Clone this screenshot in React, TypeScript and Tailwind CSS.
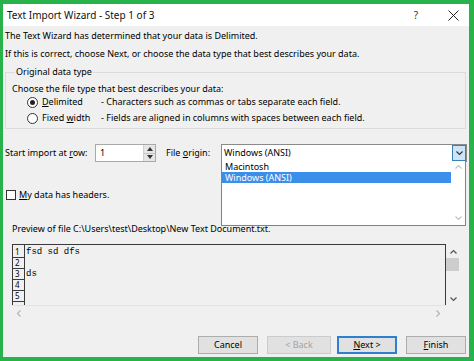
import React from 'react';

// ── Small drawings ────────────────────────────────────────────────────────────
function Chevron({ dir, className }: { dir: 'up' | 'down' | 'left' | 'right'; className?: string }) {
  const d =
    dir === 'up' ? 'M1.5 5.5 L4.5 2.5 L7.5 5.5'
      : dir === 'down' ? 'M1.5 2.5 L4.5 5.5 L7.5 2.5'
        : dir === 'left' ? 'M5.5 1.5 L2.5 4.5 L5.5 7.5'
          : 'M2.5 1.5 L5.5 4.5 L2.5 7.5';
  return (
    <svg width="9" height="9" viewBox="0 0 9 9" className={className}>
      <path d={d} fill="none" stroke="currentColor" strokeWidth="1.2" />
    </svg>
  );
}

function Radio({ checked }: { checked?: boolean }) {
  return (
    <span className="w-[11px] h-[11px] rounded-full border border-[#333] bg-white flex items-center justify-center shrink-0">
      {checked && <span className="w-[5px] h-[5px] rounded-full bg-[#222]" />}
    </span>
  );
}

// ── Title bar ─────────────────────────────────────────────────────────────────
function TitleBar() {
  return (
    <div className="h-[22px] bg-white flex items-center pl-[4px] shrink-0">
      <span className="text-[10px] leading-[14px] text-[#111]">Text Import Wizard - Step 1 of 3</span>
      <span className="ml-auto w-[20px] text-center text-[10px] leading-[14px] text-[#333]">?</span>
      <span className="ml-[14px] mr-[3px] w-[26px] flex items-center justify-center">
        <svg width="11" height="11" viewBox="0 0 11 11">
          <path d="M0.5 0.5 L10.5 10.5 M10.5 0.5 L0.5 10.5" stroke="#222" strokeWidth="1" />
        </svg>
      </span>
    </div>
  );
}

// ── Preview grid ──────────────────────────────────────────────────────────────
const previewRows = ['fsd sd dfs', '', 'ds', '', ''];

function Preview() {
  return (
    <div className="ml-[7px] w-[448px] h-[76px] grid grid-cols-[1fr_14px] grid-rows-[61px_15px]">
      <div className="border-l border-t border-r border-[#3a3a3a] border-b-0 flex overflow-hidden">
        <div className="w-[12px] border-r border-[#3a3a3a] flex flex-col">
          {previewRows.map((_, i) => (
            <div
              key={i}
              className={
                'border-b border-[#3a3a3a] pl-[2px] text-[8px] leading-[10px] ' + (i === 0 ? 'pt-[2px]' : '')
              }
            >
              {i + 1}
            </div>
          ))}
        </div>
        <div className="flex-1 flex flex-col font-['Liberation_Mono',monospace] text-[9px]">
          {previewRows.map((r, i) => (
            <div key={i} className={'leading-[11px] pl-[1px] whitespace-pre ' + (i === 0 ? 'pt-[2px]' : '')}>
              {r || ' '}
            </div>
          ))}
        </div>
      </div>
      <div className="flex flex-col items-center text-[#555]">
        <Chevron dir="up" className="mt-[4px]" />
        <div className="mt-[1px] w-[13px] h-[13px] bg-[#cdcdcd] self-start" />
        <Chevron dir="down" className="mt-auto mb-[1px]" />
      </div>
      <div className="border-t border-[#e4e4e4] flex items-center justify-between px-[3px] text-[#b5b5b5]">
        <Chevron dir="left" />
        <Chevron dir="right" />
      </div>
      <div />
    </div>
  );
}

// ── Main ──────────────────────────────────────────────────────────────────────
export default function App() {
  return (
    <div className="w-[474px] h-[361px] bg-[#27b24a] pt-[4px] pl-[3px] pr-[5px] pb-[4px] font-['Noto_Sans',sans-serif] text-black">
      <div className="h-full flex flex-col bg-[#f0f0f0]">
        <TitleBar />

        <div className="flex-1 flex flex-col px-[2px] pt-[3px] pb-[3px] text-[9px] leading-[14px]">
          <p>The Text Wizard has determined that your data is Delimited.</p>
          <p className="mt-[4px]">If this is correct, choose Next, or choose the data type that best describes your data.</p>

          {/* Original data type */}
          <fieldset className="mt-[4px] mr-[1px] border border-[#dcdcdc] pl-[6px] pb-[3px]">
            <legend className="ml-[3px] px-[1px]">Original data type</legend>
            <p className="mt-[3px]">Choose the file type that best describes your data:</p>
            <div className="-mt-[1px] h-[14px] flex items-center">
              <span className="ml-[15px] mr-[4px]"><Radio checked /></span>
              <span className="w-[59px]"><u>D</u>elimited</span>
              <span>- Characters such as commas or tabs separate each field.</span>
            </div>
            <div className="mt-[2px] h-[14px] flex items-center">
              <span className="ml-[15px] mr-[4px]"><Radio /></span>
              <span className="w-[59px]">Fixed <u>w</u>idth</span>
              <span>- Fields are aligned in columns with spaces between each field.</span>
            </div>
          </fieldset>

          {/* Start row + file origin */}
          <div className="mt-[15px] h-[18px] flex items-stretch">
            <span className="w-[90px] self-center">Start import at <u>r</u>ow:</span>
            <div className="w-[61px] border border-[#a9a9a9] bg-white flex">
              <span className="flex-1 pl-[4px] self-center">1</span>
              <div className="w-[12px] flex flex-col border-l border-[#d0d0d0]">
                <div className="flex-1 bg-[#e6e6e6] border-b border-[#c4c4c4] flex items-center justify-center">
                  <svg width="6" height="4" viewBox="0 0 6 4"><path d="M0 4 L3 0 L6 4 Z" fill="#333" /></svg>
                </div>
                <div className="flex-1 bg-[#e6e6e6] flex items-center justify-center">
                  <svg width="6" height="4" viewBox="0 0 6 4"><path d="M0 0 L3 4 L6 0 Z" fill="#333" /></svg>
                </div>
              </div>
            </div>
            <span className="ml-[10px] w-[55px] self-center">File <u>o</u>rigin:</span>
            <div className="relative flex-1 border border-[#8a8a8a] bg-white flex items-stretch">
              <span className="flex-1 pl-[2px] self-center">Windows (ANSI)</span>
              <span className="w-[14px] border border-[#3c7fb1] bg-[#cce4f7] flex items-center justify-center text-[#333]">
                <Chevron dir="down" />
              </span>

              {/* Open list */}
              <div className="absolute left-[-1px] right-[0px] top-full h-[65px] bg-white border-l border-r border-b border-[#828282] flex z-10">
                <div className="flex-1 flex flex-col">
                  <div className="pl-[3px] h-[11px] leading-[11px]">Macintosh</div>
                  <div className="pl-[3px] h-[11px] leading-[11px] bg-[#3b8eea] text-white">Windows (ANSI)</div>
                </div>
                <div className="w-[14px] flex flex-col items-center justify-between py-[2px] text-[#c2c2c2]">
                  <Chevron dir="up" />
                  <Chevron dir="down" />
                </div>
              </div>
            </div>
          </div>

          {/* Headers checkbox */}
          <div className="mt-[26px] h-[14px] flex items-center">
            <span className="ml-[1px] w-[10px] h-[10px] border border-[#333] bg-white" />
            <span className="ml-[3px]"><u>M</u>y data has headers.</span>
          </div>

          <p className="mt-[20px] pl-[7px]">Preview of file C:\Users\test\Desktop\New Text Document.txt.</p>

          <div className="mt-[8px]">
            <Preview />
          </div>

          {/* Buttons */}
          <div className="mt-auto h-[18px] flex justify-end pr-[1px]">
            <button className="w-[60px] mr-[9px] bg-[#e1e1e1] border border-[#adadad]">Cancel</button>
            <button className="w-[64px] mr-[6px] bg-[#e1e1e1] border border-[#cccccc] text-[#a3a3a3]">&lt; Back</button>
            <button className="w-[60px] mr-[9px] bg-[#e1e1e1] border-2 border-[#2f7fd0]"><u>N</u>ext &gt;</button>
            <button className="w-[60px] bg-[#e1e1e1] border border-[#adadad]"><u>F</u>inish</button>
          </div>
        </div>
      </div>
    </div>
  );
}
